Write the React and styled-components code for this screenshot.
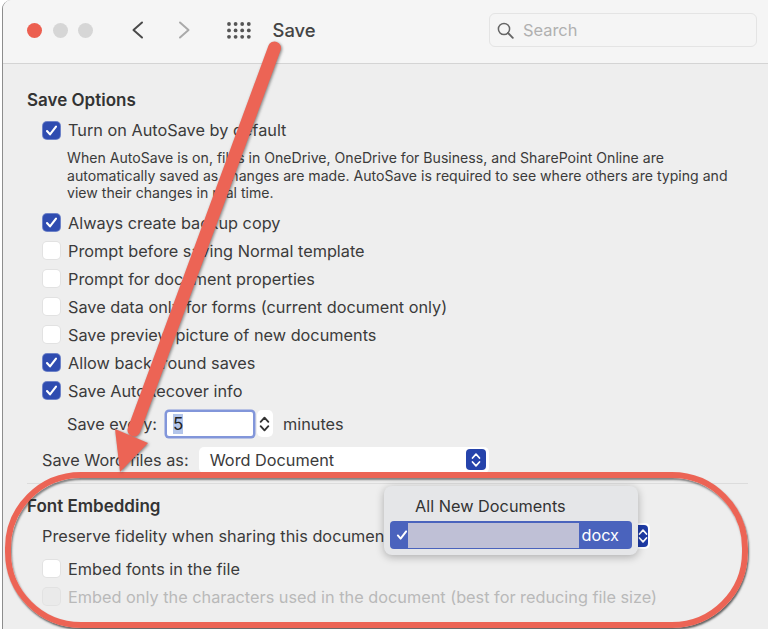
import React from "react";
import styled, { createGlobalStyle } from "styled-components";

const GlobalStyle = createGlobalStyle`
  html, body { margin: 0; padding: 0; background: #fff; }
  body { font-family: Inter, "Liberation Sans", sans-serif; }
`;

const Page = styled.div`
  position: relative;
  width: 768px;
  height: 629px;
  overflow: hidden;
  background: #fff;
`;

const Win = styled.div`
  margin-left: 2px;
  height: 629px;
  background: #eeeeee;
  border-left: 1px solid #8d8d8d;
  border-top-left-radius: 9px;
  color: #3b3b3b;
  overflow: hidden;
`;

const TitleBar = styled.div`
  display: flex;
  align-items: center;
  height: 64px;
  padding: 0 11px 3px 24px;
  box-sizing: border-box;
  background: #f5f5f5;
  border-bottom: 1px solid #d4d4d4;
`;

const Light = styled.span`
  width: 15px;
  height: 15px;
  margin-right: 10.5px;
  border-radius: 50%;
  background: ${p => p.$color};
`;

const NavIcon = styled.svg`
  display: block;
  margin-left: ${p => p.$left}px;
`;

const WinTitle = styled.div`
  margin-left: 22px;
  font-size: 18.4px;
  font-weight: 500;
  color: #444;
`;

const SearchBox = styled.div`
  display: flex;
  align-items: center;
  gap: 9px;
  width: 268px;
  height: 34px;
  margin-left: auto;
  padding-left: 7px;
  box-sizing: border-box;
  border: 1px solid #e4e4e4;
  border-radius: 6px;
  font-size: 16.4px;
  color: #b0b0b0;
`;

const Content = styled.div`
  padding: 26px 0 0 24px;
`;

const Heading = styled.div`
  font-size: 17px;
  font-weight: 600;
  line-height: 20px;
  color: #333;
`;

const Indented = styled.div`
  padding: 6px 0 0 15px;
`;

const Row = styled.div`
  display: flex;
  align-items: center;
  gap: 8px;
  height: 28px;
  font-size: 16.3px;
  color: ${p => (p.$disabled ? "#b9b9b9" : "#3b3b3b")};
`;

const Box = styled.span`
  display: flex;
  align-items: center;
  justify-content: center;
  flex: none;
  width: 17px;
  height: 17px;
  margin-left: 1px;
  border-radius: 4px;
  background: ${p => (p.$checked ? "#2f4cb0" : p.$disabled ? "#eaeaea" : "#fff")};
  box-shadow: 0 0 0 1px ${p => (p.$checked ? "#6d82c8" : "#e2e2e2")};
`;

const Desc = styled.p`
  margin: 0;
  padding: 5px 0 7px 25px;
  font-size: 14.1px;
  line-height: 17.5px;
  color: #3b3b3b;
  white-space: nowrap;
`;

const EveryRow = styled.div`
  display: flex;
  align-items: center;
  height: 28px;
  margin-top: 5px;
  padding-left: 25px;
  font-size: 16.3px;
`;

const NumberField = styled.div`
  width: 86px;
  height: 24px;
  margin-left: 10px;
  padding-left: 6px;
  box-sizing: border-box;
  background: #fff;
  border-radius: 2px;
  box-shadow: 0 0 0 2.5px #8296da;
  font-size: 17px;
  line-height: 24px;
  color: #222;
`;

const Selected = styled.span`
  background: #b3c5ea;
`;

const Stepper = styled.span`
  display: flex;
  align-items: center;
  justify-content: center;
  width: 16px;
  height: 27px;
  margin: 0 10px 0 4px;
  background: #fff;
  border-radius: 5px;
`;

const SelectRow = styled.div`
  display: flex;
  align-items: center;
  gap: 10px;
  height: 26px;
  margin-top: 9px;
  font-size: 16.3px;
`;

const Select = styled.div`
  display: flex;
  align-items: center;
  justify-content: space-between;
  width: 290px;
  height: 26px;
  padding: 0 3px 0 11px;
  box-sizing: border-box;
  background: #fff;
  border-radius: 5px;
  color: #3b3b3b;
`;

const SelectButton = styled.span`
  display: flex;
  align-items: center;
  justify-content: center;
  width: 20px;
  height: 21px;
  background: #2543ab;
  border-radius: 4px;
`;

const Divider = styled.div`
  height: 1px;
  margin: 10px 20px 12px 0;
  background: #dcdcdc;
`;

const PreserveRow = styled.div`
  height: 22px;
  margin-top: 9px;
  padding-left: 15px;
  font-size: 16.3px;
  line-height: 22px;
  white-space: nowrap;
`;

const EmbedList = styled.div`
  margin-top: 8px;
  padding-left: 15px;
`;

const PopupStub = styled.span`
  position: absolute;
  left: 625px;
  top: 523px;
  display: flex;
  align-items: center;
  justify-content: flex-end;
  width: 25px;
  height: 26px;
  padding-right: 2px;
  box-sizing: border-box;
  background: #fff;
  border-radius: 5px;
`;

const StubFill = styled.span`
  display: flex;
  align-items: center;
  justify-content: flex-end;
  width: 20px;
  height: 22px;
  background: #1f3ca6;
  border-radius: 4px;
`;

const Menu = styled.div`
  position: absolute;
  left: 384px;
  top: 486px;
  width: 254px;
  height: 69px;
  padding: 6px;
  box-sizing: border-box;
  background: #e5e6e8;
  border-radius: 8px;
  box-shadow: 0 2px 9px rgba(0, 0, 0, 0.28);
  font-size: 16.3px;
`;

const MenuItem = styled.div`
  height: 29px;
  padding-left: 25px;
  line-height: 29px;
  color: #333;
`;

const MenuActive = styled.div`
  position: relative;
  display: flex;
  align-items: center;
  justify-content: flex-end;
  height: 28px;
  padding-right: 13px;
  background: #4a63bd;
  border-radius: 4px;
  color: #fff;
`;

const MenuCheck = styled.svg`
  position: absolute;
  left: 6px;
  top: 8px;
`;

const Redacted = styled.span`
  position: absolute;
  left: 18px;
  top: 2px;
  width: 171px;
  height: 25px;
  background: #bfc0d6;
`;

const Ring = styled.div`
  position: absolute;
  left: 5px;
  top: 472px;
  width: 743px;
  height: 156px;
  box-sizing: border-box;
  border: 6px solid #ec6455;
  border-radius: 76px;
  box-shadow: 1px 2px 2px rgba(40, 40, 40, 0.7), inset 1px 2px 2px rgba(40, 40, 40, 0.55);
`;

const ArrowSvg = styled.svg`
  position: absolute;
  left: 0;
  top: 0;
  pointer-events: none;
  filter: drop-shadow(1px 1px 1.5px rgba(40, 40, 40, 0.55));
`;

const Tick = ({ color = "#fff", size = 13 }) => (
  <svg width={size} height={size} viewBox="0 0 13 13" fill="none">
    <path d="M2 7l3 3.4L11 2.6" stroke={color} strokeWidth="2.1" strokeLinecap="round" strokeLinejoin="round" />
  </svg>
);

const UpDown = ({ color, width = 10, height = 16 }) => (
  <svg width={width} height={height} viewBox="0 0 10 16" fill="none">
    <path d="M1.5 6L5 2.2 8.5 6M1.5 10L5 13.8 8.5 10" stroke={color} strokeWidth="1.7" strokeLinecap="round" strokeLinejoin="round" />
  </svg>
);

const CheckRow = ({ checked, disabled, children }) => (
  <Row $disabled={disabled}>
    <Box $checked={checked} $disabled={disabled}>{checked && <Tick />}</Box>
    <span>{children}</span>
  </Row>
);

const dots = [];
for (let y = 0; y < 3; y++) {
  for (let x = 0; x < 4; x++) dots.push([2 + x * 6.6, 2 + y * 6.4]);
}

export default function App() {
  return (
    <Page>
      <GlobalStyle />
      <Win>
        <TitleBar>
          <Light $color="#ec5f50" />
          <Light $color="#d6d6d6" />
          <Light $color="#d6d6d6" />
          <NavIcon $left={27} width="13" height="18" viewBox="0 0 13 18" fill="none">
            <path d="M11 1.5L2.5 9l8.5 7.5" stroke="#4a4a4a" strokeWidth="2" strokeLinecap="round" strokeLinejoin="round" />
          </NavIcon>
          <NavIcon $left={34} width="13" height="18" viewBox="0 0 13 18" fill="none">
            <path d="M2 1.5L10.5 9 2 16.5" stroke="#aaaaaa" strokeWidth="2" strokeLinecap="round" strokeLinejoin="round" />
          </NavIcon>
          <NavIcon $left={36} width="24" height="17" viewBox="0 0 24 17">
            {dots.map(([cx, cy]) => (
              <circle key={`${cx}-${cy}`} cx={cx} cy={cy} r="1.9" fill="#555" />
            ))}
          </NavIcon>
          <WinTitle>Save</WinTitle>
          <SearchBox>
            <svg width="17" height="17" viewBox="0 0 17 17" fill="none">
              <circle cx="7" cy="7" r="5.6" stroke="#666" strokeWidth="1.5" />
              <path d="M11 11l4.8 4.8" stroke="#666" strokeWidth="1.9" strokeLinecap="round" />
            </svg>
            Search
          </SearchBox>
        </TitleBar>
        <Content>
          <Heading>Save Options</Heading>
          <Indented>
            <CheckRow checked>Turn on AutoSave by default</CheckRow>
            <Desc>
              When AutoSave is on, files in OneDrive, OneDrive for Business, and SharePoint Online are<br />
              automatically saved as changes are made. AutoSave is required to see where others are typing and<br />
              view their changes in real time.
            </Desc>
            <CheckRow checked>Always create backup copy</CheckRow>
            <CheckRow>Prompt before saving Normal template</CheckRow>
            <CheckRow>Prompt for document properties</CheckRow>
            <CheckRow>Save data only for forms (current document only)</CheckRow>
            <CheckRow>Save preview picture of new documents</CheckRow>
            <CheckRow checked>Allow background saves</CheckRow>
            <CheckRow checked>Save AutoRecover info</CheckRow>
            <EveryRow>
              Save every:
              <NumberField><Selected>5</Selected></NumberField>
              <Stepper><UpDown color="#333" width="11" height="18" /></Stepper>
              minutes
            </EveryRow>
            <SelectRow>
              Save Word files as:
              <Select>
                Word Document
                <SelectButton><UpDown color="#fff" /></SelectButton>
              </Select>
            </SelectRow>
          </Indented>
          <Divider />
          <Heading>Font Embedding</Heading>
          <PreserveRow>Preserve fidelity when sharing this document:</PreserveRow>
          <EmbedList>
            <CheckRow>Embed fonts in the file</CheckRow>
            <CheckRow disabled>Embed only the characters used in the document (best for reducing file size)</CheckRow>
          </EmbedList>
        </Content>
      </Win>

      <PopupStub><StubFill><UpDown color="#fff" /></StubFill></PopupStub>
      <Menu>
        <MenuItem>All New Documents</MenuItem>
        <MenuActive>
          <MenuCheck width="12" height="12" viewBox="0 0 13 13" fill="none">
            <path d="M2 7l3 3.4L11 2.6" stroke="#fff" strokeWidth="2.1" strokeLinecap="round" strokeLinejoin="round" />
          </MenuCheck>
          <Redacted />
          docx
        </MenuActive>
      </Menu>

      <Ring />
      <ArrowSvg width="768" height="629" viewBox="0 0 768 629">
        <path d="M274.5 48L134 430" stroke="#ec6455" strokeWidth="13" strokeLinecap="round" />
        <polygon points="120,472 115,429 148,443" fill="#ec6455" />
      </ArrowSvg>
    </Page>
  );
}
